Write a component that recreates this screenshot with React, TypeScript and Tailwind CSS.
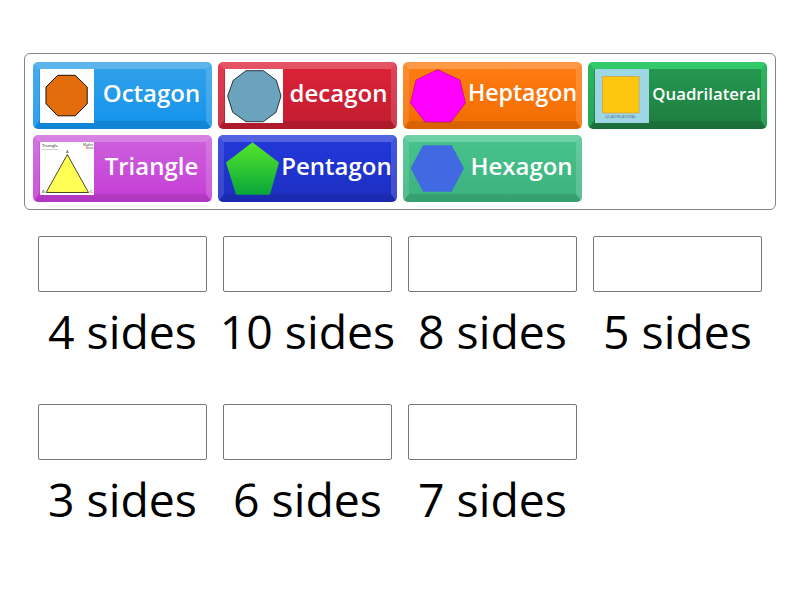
import type { ReactNode } from 'react';

type Tile = {
  name: string;
  color: string;
  edge?: string;
  text?: string;
  width: number;
  art: ReactNode;
};

const tiles: Tile[] = [
  {
    name: 'Octagon',
    color: 'from-[#31a1e8] to-[#0f93ed]',
    width: 54,
    art: (
      <>
        <rect width="54" height="54" fill="#fff" />
        <polygon points="17.7,6.3 35.3,6.3 47.2,18 47.2,34.8 35.3,46.8 17.7,46.8 6,34.8 6,18" fill="#e36c0a" stroke="#1c1208" />
      </>
    ),
  },
  {
    name: 'decagon',
    color: 'from-[#df2238] to-[#c01d30]',
    width: 58,
    art: (
      <>
        <rect width="58" height="54" fill="#fff" />
        <polygon points="21,1.7 38.3,1.7 51.3,11.3 56,27 51,43.3 38.3,52.7 21,52.7 7.7,43.3 2.7,27 8.3,11.3" fill="#6ba3bc" stroke="#26363d" />
      </>
    ),
  },
  {
    name: 'Heptagon',
    color: 'from-[#ff7d14] to-[#f26c00]',
    text: 'text-[23.1px]',
    width: 56,
    art: <polygon points="27.7,0.5 50,11 55.5,34 41,53 15,53 0.5,34 6,11" fill="#ff00ff" stroke="#a01078" strokeWidth="0.6" />,
  },
  {
    name: 'Quadrilateral',
    color: 'from-[#259c50] to-[#1f7a40]',
    edge: 'border-t-[#3cea7d]/60 border-r-[#3cea7d]/35 border-b-black/10 border-l-[#3cea7d]/35',
    text: 'text-[16.8px] pt-1',
    width: 54,
    art: (
      <>
        <rect width="54" height="54" fill="#9dd6e4" />
        <rect x="7.5" y="7.5" width="36.5" height="36.5" fill="#ffc60f" stroke="#c9a548" strokeWidth="0.8" />
        <text x="25.5" y="49" fontSize="4" textAnchor="middle" textLength="31" fill="#55708a">QUADRILATERAL</text>
      </>
    ),
  },
  {
    name: 'Triangle',
    color: 'from-[#cd61dc] to-[#c53bd6]',
    width: 54,
    art: (
      <>
        <rect width="54" height="53" fill="#fff" />
        <polygon points="27.3,12.5 48.5,50.5 6.2,50.5" fill="#ffff55" stroke="#33331c" strokeWidth="0.9" />
        <path d="M2 7.5h16" stroke="#999" strokeWidth="0.5" />
        <text x="2" y="5.3" fontSize="4.3" fill="#111">Triangle</text>
        <text x="43" y="4.3" fontSize="3.5" fill="#333">Maths</text>
        <text x="46" y="7.3" fontSize="2.8" fill="#733">Menu</text>
        <text x="26" y="11" fontSize="4" fill="#222">A</text>
        <text x="2" y="51" fontSize="4" fill="#222">B</text>
        <text x="50" y="51" fontSize="4" fill="#222">C</text>
      </>
    ),
  },
  {
    name: 'Pentagon',
    color: 'from-[#2338dc] to-[#1d2fc0]',
    width: 54,
    art: (
      <>
        <defs>
          <linearGradient id="lime" x1="0" y1="0" x2="0" y2="1">
            <stop offset="0" stopColor="#55e62b" />
            <stop offset="1" stopColor="#08a63b" />
          </linearGradient>
        </defs>
        <polygon points="27.5,0.3 54,20.5 45,52.8 11,52.8 1,20.5" fill="url(#lime)" />
      </>
    ),
  },
  {
    name: 'Hexagon',
    color: 'from-[#48c48d] to-[#3cb17d]',
    width: 54,
    art: <polygon points="13,3.3 41.7,3.3 54,26.3 41.7,49.7 13,49.7 0.7,26.3" fill="#4169e1" />,
  },
];

const answers = ['4 sides', '10 sides', '8 sides', '5 sides', '3 sides', '6 sides', '7 sides'];

const defaultEdge = 'border-t-white/22 border-r-white/15 border-b-black/10 border-l-white/12';

function TileCard({ tile }: { tile: Tile }) {
  return (
    <div
      className={`flex h-[67px] rounded-[5px] border-x-[6px] border-t-[7px] border-b-[8px] bg-linear-to-b bg-origin-border ${tile.edge ?? defaultEdge} ${tile.color}`}
    >
      <svg className="ml-px h-[54px] shrink-0" width={tile.width} height="54">
        {tile.art}
      </svg>
      <div className="-mr-[3px] flex flex-1 items-center justify-center pb-[5px]">
        <span className={`whitespace-nowrap font-semibold leading-none text-white ${tile.text ?? 'text-2xl'}`}>
          {tile.name}
        </span>
      </div>
    </div>
  );
}

export default function App() {
  return (
    <main className="h-[600px] w-[800px] overflow-hidden bg-white px-6 pt-[53px] font-['Open_Sans',sans-serif]">
      {/* Draggable tiles */}
      <section className="grid h-[157px] grid-cols-[repeat(4,179px)] content-start gap-1.5 rounded-md border border-[#858585] p-2">
        {tiles.map((tile) => (
          <TileCard key={tile.name} tile={tile} />
        ))}
      </section>

      {/* Drop slots */}
      <section className="mt-[26px] grid grid-cols-[repeat(4,169px)] gap-4 px-3.5">
        {answers.map((answer) => (
          <div key={answer} className="flex h-[152px] flex-col items-center">
            <div className="h-14 w-full shrink-0 rounded-xs border border-[#777]" />
            <p className="mt-[7px] whitespace-nowrap text-[46.4px] leading-[64px] text-black">{answer}</p>
          </div>
        ))}
      </section>
    </main>
  );
}
